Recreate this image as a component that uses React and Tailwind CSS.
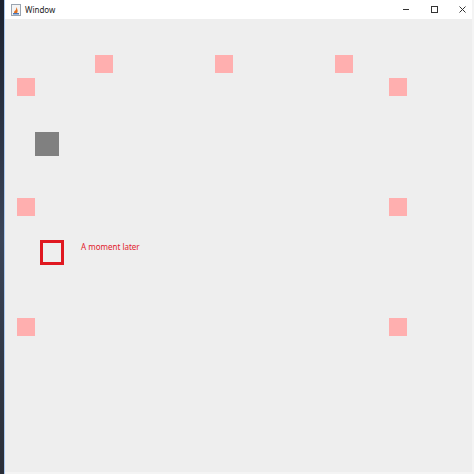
import React from "react";

const pinks = [
  [90, 36], [210, 36], [330, 36],
  [12, 59], [384, 59],
  [12, 179], [384, 179],
  [12, 299], [384, 299],
];

export default function App() {
  return (
    <div className="w-[474px] h-[474px] flex bg-[#f4f4f4] overflow-hidden" style={{ fontFamily: '"Segoe UI", "Noto Sans", "Open Sans", sans-serif' }}>
      <div className="w-[4px] h-full bg-gradient-to-b from-[#1c2230] via-[#3a4458] to-[#2a2e38]" />
      <div className="w-[1px] h-full bg-[#a9c8ee]" />
      <div className="w-[467px] flex flex-col h-[472px]">
        <div className="h-[19px] bg-white flex items-center shrink-0">
          <svg width="10" height="12" viewBox="0 0 10 12" className="ml-[6px]">
            <rect x="0.5" y="0.5" width="9" height="11" fill="#f4f4f4" stroke="#9aa4b0" />
            <path d="M3 9 C3 6 6 7 5 3 C7 5 7 8 6 9 Z" fill="#e07020" />
            <rect x="2" y="9" width="6" height="1.5" fill="#4a78b8" />
          </svg>
          <span className="ml-[4px] text-[8px] text-[#222] leading-none">Window</span>
          <div className="flex-1" />
          <div className="w-[28px] flex justify-center">
            <div className="w-[6px] h-[1px] bg-[#333]" />
          </div>
          <div className="w-[28px] flex justify-center">
            <div className="w-[7px] h-[7px] border border-[#333]" />
          </div>
          <div className="w-[28px] flex justify-center mr-[-4px]">
            <svg width="7" height="7" viewBox="0 0 7 7">
              <path d="M0.5 0.5 L6.5 6.5 M6.5 0.5 L0.5 6.5" stroke="#333" strokeWidth="1" />
            </svg>
          </div>
        </div>
        <div className="relative flex-1 bg-[#eeeeee]">
          {pinks.map(([x, y], i) => (
            <div key={i} className="absolute w-[18px] h-[18px] bg-[#ffafaf]" style={{ left: x, top: y }} />
          ))}
          <div className="absolute left-[30px] top-[113px] w-[24px] h-[24px] bg-[#808080]" />
          <div className="absolute left-[35px] top-[221px] w-[24px] h-[25px] border-[3px] border-[#e01820]" />
          <span className="absolute left-[76px] top-[222px] text-[8px] text-[#e2202c] leading-[12px]">A moment later</span>
        </div>
      </div>
    </div>
  );
}
